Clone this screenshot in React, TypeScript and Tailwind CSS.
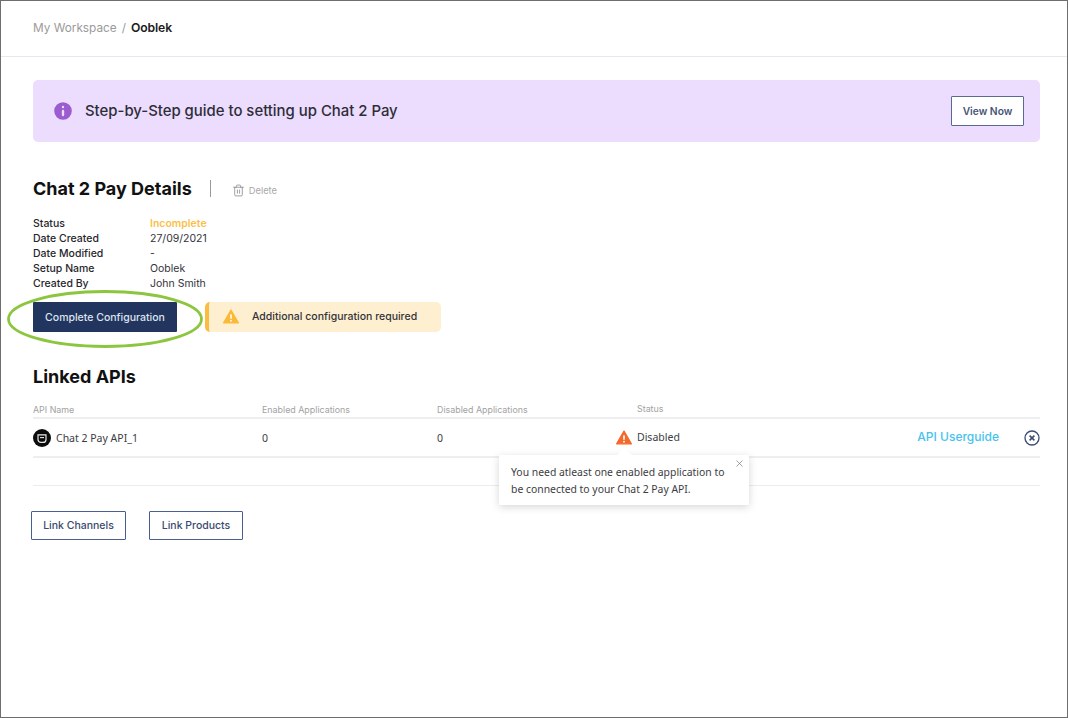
import { Info, Trash2, X } from 'lucide-react';

const inter = "font-['Inter',sans-serif]";
const noto = "font-['Noto_Sans',sans-serif]";

const details = [
  { label: 'Status', value: 'Incomplete', tone: 'text-[#fbbf4a] font-semibold' },
  { label: 'Date Created', value: '27/09/2021', tone: 'text-[#33333a]' },
  { label: 'Date Modified', value: '-', tone: 'text-[#33333a]' },
  { label: 'Setup Name', value: 'Ooblek', tone: 'text-[#33333a]' },
  { label: 'Created By', value: 'John Smith', tone: 'text-[#33333a]' },
];

function Triangle({ color, className }: { color: string; className: string }) {
  return (
    <svg viewBox="0 0 24 22" className={className}>
      <path d="M12 1.5 23 20.5H1Z" fill={color} stroke={color} strokeWidth="2" strokeLinejoin="round" />
      <rect x="10.8" y="7.5" width="2.4" height="7" rx="1" fill="#fff" />
      <circle cx="12" cy="17.2" r="1.4" fill="#fff" />
    </svg>
  );
}

function OutlineButton({ label, width }: { label: string; width: string }) {
  return (
    <button className={`${width} h-[29px] border border-[#4a5f8f] rounded-[1px] bg-white text-[10.5px] font-medium text-[#3a4a6e]`}>
      {label}
    </button>
  );
}

export default function App() {
  return (
    <div className={`relative w-[1068px] h-[718px] border border-[#6e6e6e] bg-white overflow-hidden ${inter}`}>
      <div className="h-[56px] border-b border-[#e6e8f0] pl-[32px] pr-[27px] flex items-center gap-[5px] text-[11.8px]">
        <span className="text-[#9a9a9a]">My Workspace</span>
        <span className="text-[#9a9a9a]">/</span>
        <span className="text-[12.2px] font-semibold text-[#1c1c22] tracking-[-0.1px]">Ooblek</span>
      </div>

      <div className="pl-[32px] pr-[27px] pt-[23px]">
        <div className="h-[62px] rounded-[5px] bg-[#ecdcfd] pl-[18px] pr-[16px] flex items-center justify-between">
          <div className="flex items-center gap-[10px]">
            <Info className="w-[24px] h-[24px] text-[#ecdcfd] fill-[#9a5ccf]" strokeWidth={2.4} />
            <span className="pt-px text-[14.9px] font-medium text-[#2d2d38]">Step-by-Step guide to setting up Chat 2 Pay</span>
          </div>
          <button className="w-[73px] h-[30px] pt-px border border-[#5b6a92] rounded-[1px] bg-white text-[10.25px] font-semibold text-[#465478]">
            View Now
          </button>
        </div>

        <div className="mt-[34px] flex items-center h-[24px]">
          <h1 className="text-[18px] font-bold text-[#111]">Chat 2 Pay Details</h1>
          <div className="ml-[18px] w-px h-[17px] bg-[#9a9a9a]" />
          <Trash2 className="ml-[21px] mt-[4px] w-[13px] h-[13px] text-[#8a8a8a]" strokeWidth={1.5} />
          <span className="ml-[4px] mt-[5px] text-[9.3px] text-[#a8a8a8]">Delete</span>
        </div>

        <div className="mt-[16px] flex flex-col">
          {details.map((d) => (
            <div key={d.label} className="h-[15.1px] flex items-center text-[10.5px]">
              <span className="w-[117px] font-medium text-[#26262c]">{d.label}</span>
              <span className={d.tone}>{d.value}</span>
            </div>
          ))}
        </div>

        <div className="mt-[10.5px] flex items-center gap-[28px]">
          <button className="w-[144px] h-[30px] pt-px rounded-[1px] bg-[#22355e] text-[10.5px] font-medium text-[#dfe4ee]">
            Complete Configuration
          </button>
          <div className="w-[236px] h-[30px] rounded-[5px] border-l-[4px] border-[#fbbc42] bg-[#feefd0] pl-[14px] flex items-center gap-[13px]">
            <Triangle color="#fbb938" className="w-[16px] h-[15px]" />
            <span className="text-[10.5px] font-medium text-[#33333a]">Additional configuration required</span>
          </div>
        </div>

        <h2 className="mt-[33px] text-[18px] leading-[24px] font-bold text-[#111]">Linked APIs</h2>

        <div className="mt-[14px] h-[16px] border-b-2 border-[#eeeef0] flex items-start text-[8.9px] text-[#a2a2a2]">
          <span className="w-[229px]">API Name</span>
          <span className="w-[175px]">Enabled Applications</span>
          <span className="w-[200px]">Disabled Applications</span>
          <span className="-mt-px">Status</span>
        </div>

        <div className={`h-[39px] pt-[2px] border-b-2 border-[#eeeef0] flex items-center text-[10.5px] text-[#3c3c42] ${noto}`}>
          <div className="w-[229px] flex items-center gap-[5px]">
            <svg viewBox="0 0 18 18" className="w-[18px] h-[18px]">
              <circle cx="9" cy="9" r="9" fill="#0c0c0c" />
              <path d="M5 5.8h8v4.6a3 3 0 0 1-3 3H8a3 3 0 0 1-3-3Z" fill="none" stroke="#e8e8e8" strokeWidth="1.2" />
              <path d="M7 8.6h4" stroke="#e8e8e8" strokeWidth="1.1" />
            </svg>
            <span>Chat 2 Pay API_1</span>
          </div>
          <span className="w-[175px]">0</span>
          <span className="w-[179px]">0</span>
          <Triangle color="#f4692a" className="w-[16px] h-[15px] -mt-[2px]" />
          <span className="ml-[5px] -mt-[1px]">Disabled</span>
          <span className={`ml-auto -mt-[2px] text-[12px] font-medium text-[#45c3ee] ${inter}`}>API Userguide</span>
          <svg viewBox="0 0 16 16" className="ml-[25px] -mt-[1px] w-[16px] h-[16px]">
            <circle cx="8" cy="8" r="7" fill="none" stroke="#3b4a70" strokeWidth="1.3" />
            <path d="m5.6 5.6 4.8 4.8m0-4.8-4.8 4.8" stroke="#3b4a70" strokeWidth="1.5" />
          </svg>
        </div>

        <div className="mt-[27px] border-b border-[#ececee]" />

        <div className="mt-[25px] -ml-[2px] flex gap-[23px]">
          <OutlineButton label="Link Channels" width="w-[95px]" />
          <OutlineButton label="Link Products" width="w-[94px]" />
        </div>
      </div>

      {/* tooltip under the warning triangle */}
      <div className={`absolute left-[498px] top-[454px] w-[250px] h-[50px] bg-white shadow-[0_2px_8px_rgba(0,0,0,0.16)] pl-[12px] pt-[9px] text-[10.4px] leading-[17px] text-[#3c3c42] ${noto}`}>
        <div className="absolute left-[120px] -top-[5px] w-[11px] h-[11px] rotate-45 bg-white" />
        <X className="absolute right-[4px] top-[3px] w-[11px] h-[11px] text-[#777]" strokeWidth={1.5} />
        <p className="relative">
          You need atleast one enabled application to
          <br />
          be connected to your Chat 2 Pay API.
        </p>
      </div>

      {/* green highlight ring drawn over the page */}
      <svg viewBox="0 0 198 60" className="absolute left-[5px] top-[288px] w-[198px] h-[60px] pointer-events-none">
        <ellipse cx="99" cy="30" rx="96.5" ry="27.5" fill="none" stroke="#8cc63f" strokeWidth="2.8" />
      </svg>
    </div>
  );
}
